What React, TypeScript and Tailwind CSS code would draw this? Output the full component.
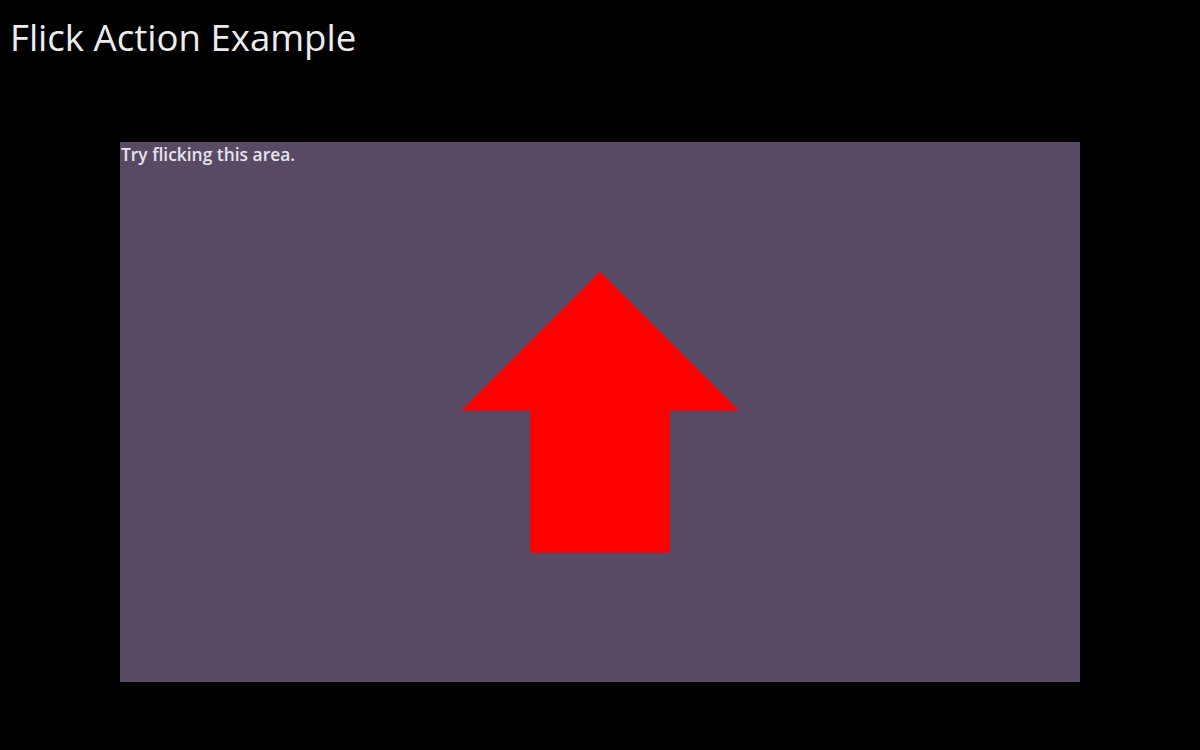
export default function App() {
  return (
    <div className="w-[1200px] h-[750px] bg-black overflow-hidden" style={{ fontFamily: '"Open Sans", sans-serif' }}>
      <h1 className="pl-[10px] pt-[13px] h-[142px] text-[36.6px] leading-[48px] text-[#ececec]">Flick Action Example</h1>
      <div className="mx-auto w-[960px] h-[540px] bg-[#584a65] relative">
        <p className="pl-px pt-px text-[17.4px] leading-[22px] font-semibold text-[#e6e4ea]">Try flicking this area.</p>
        {/* up arrow shows the last flick direction */}
        <svg className="absolute left-[340px] top-[129px]" width="280" height="283" viewBox="0 0 280 283">
          <polygon points="140,1 279,140 210,140 210,282 70,282 70,140 1,140" fill="#ff0000" />
        </svg>
      </div>
    </div>
  )
}
